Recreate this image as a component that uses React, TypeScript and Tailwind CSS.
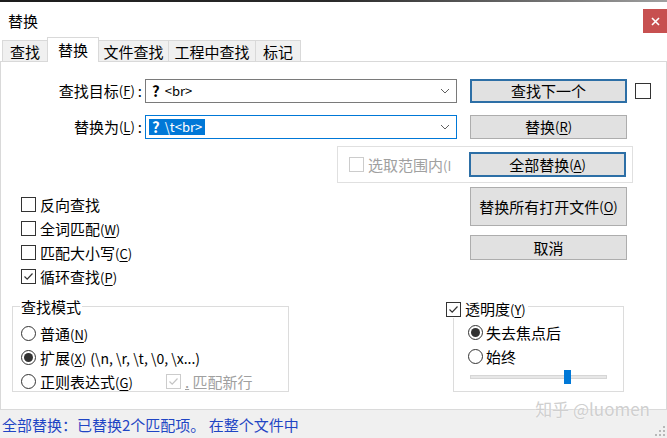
import React from "react";

const Mn = ({ ch }: { ch: string }) => (
  <span className="text-[13px]">
    (<span className="underline underline-offset-2">{ch}</span>)
  </span>
);

const Check = ({ checked = false, disabled = false }: { checked?: boolean; disabled?: boolean }) => (
  <span
    className={`flex h-[15px] w-[15px] shrink-0 items-center justify-center border bg-white ${
      disabled ? "border-[#cccccc]" : "border-[#333333]"
    }`}
  >
    {checked && (
      <svg width="11" height="11" viewBox="0 0 11 11" fill="none">
        <path
          d="M1.5 5.5L4.2 8.2L9.5 2.5"
          stroke={disabled ? "#c4c4c4" : "#333333"}
          strokeWidth="1.2"
        />
      </svg>
    )}
  </span>
);

const Radio = ({ on = false }: { on?: boolean }) => (
  <span className="flex h-[15px] w-[15px] shrink-0 items-center justify-center rounded-full border border-[#333333] bg-white">
    {on && <span className="h-[9px] w-[9px] rounded-full bg-[#333333]" />}
  </span>
);

const Btn = ({
  children,
  def = false,
  className = "",
}: {
  children: React.ReactNode;
  def?: boolean;
  className?: string;
}) => (
  <div
    className={`flex w-[157px] shrink-0 items-center justify-center bg-[#e1e1e1] ${
      def ? "border-2 border-[#2d6fa6]" : "border border-[#adadad]"
    } ${className}`}
  >
    {children}
  </div>
);

const Chevron = () => (
  <svg width="10" height="6" viewBox="0 0 10 6" fill="none" className="ml-auto mr-[6px]">
    <path d="M1 1L5 5L9 1" stroke="#606060" strokeWidth="1" />
  </svg>
);

const tabs = [
  { label: "查找", w: "w-[46px]" },
  { label: "替换", w: "w-[52px]", active: true },
  { label: "文件查找", w: "w-[71px]" },
  { label: "工程中查找", w: "w-[88px]" },
  { label: "标记", w: "w-[46px]" },
];

export default function App() {
  return (
    <div className="relative flex h-[438px] w-[667px] flex-col overflow-hidden bg-white font-['Noto_Sans_CJK_SC','Noto_Sans',sans-serif] text-[15px] leading-none text-black">
      <div className="h-[2px] bg-gradient-to-r from-[#1c1c1c] via-[#2a2a2a] to-[#a0a0a0]" />

      {/* title */}
      <div className="flex h-[35px] items-start justify-between">
        <span className="ml-[8px] mt-[10px] leading-[18px]">替换</span>
        <div className="mt-[7px] flex h-[24px] w-[24px] items-center justify-center bg-[#c75050]">
          <svg width="9" height="9" viewBox="0 0 9 9" fill="none">
            <path d="M1 1L8 8M8 1L1 8" stroke="#ffffff" strokeWidth="1.6" />
          </svg>
        </div>
      </div>

      {/* tabs */}
      <div className="flex h-[24px] items-end pl-[2px]">
        {tabs.map((t) =>
          t.active ? (
            <div
              key={t.label}
              className={`relative z-10 -mb-px -ml-px flex h-[25px] ${t.w} items-start justify-center border border-b-0 border-[#d9d9d9] bg-white pt-[4px]`}
            >
              {t.label}
            </div>
          ) : (
            <div
              key={t.label}
              className={`-ml-px flex h-[21px] ${t.w} items-center justify-center border border-b-0 border-[#d9d9d9] bg-[#f0f0f0] first:ml-0`}
            >
              {t.label}
            </div>
          )
        )}
      </div>

      {/* panel */}
      <div className="flex h-[348px] flex-col border-x border-t border-[#d9d9d9] pr-[2px]">
        {/* row 1 */}
        <div className="mt-[16px] flex h-[25px] items-center">
          <div className="flex w-[141px] items-center justify-end">
            查找目标<Mn ch="F" />
            <span className="ml-[3px]">:</span>
          </div>
          <div className="ml-[3px] flex h-[24px] w-[312px] items-center border border-[#7a7a7a] pl-[6px]">
            <span className="text-[15px] font-bold">?</span>
            <span className="ml-[5px] text-[13px]">&lt;br&gt;</span>
            <Chevron />
          </div>
          <Btn def className="ml-[13px] h-[24px]">
            查找下一个
          </Btn>
          <div className="ml-[8px]">
            <span className="block h-[16px] w-[16px] border border-[#333333]" />
          </div>
        </div>

        {/* row 2 */}
        <div className="mt-[11px] flex h-[25px] items-center">
          <div className="flex w-[141px] items-center justify-end">
            替换为<Mn ch="L" />
            <span className="ml-[3px]">:</span>
          </div>
          <div className="ml-[3px] flex h-[24px] w-[312px] items-center border border-[#0078d7] pl-[3px]">
            <span className="flex h-[16px] items-center bg-[#0078d7] px-[3px] text-white">
              <span className="text-[15px] font-bold">?</span>
              <span className="ml-[5px] text-[13px]">\t&lt;br&gt;</span>
            </span>
            <Chevron />
          </div>
          <Btn className="ml-[13px] h-[24px]">
            替换<Mn ch="R" />
          </Btn>
        </div>

        {/* row 3: selection group */}
        <div className="ml-[336px] mt-[7px] flex h-[37px] w-[296px] items-center border border-[#e0e0e0]">
          <div className="ml-[11px]">
            <Check disabled />
          </div>
          <span className="ml-[4px] w-[86px] whitespace-nowrap text-[#a0a0a0]">
            选取范围内<span className="text-[13px]">(I</span>
          </span>
          <Btn def className="ml-[15px] h-[25px]">
            全部替换<Mn ch="A" />
          </Btn>
        </div>

        {/* row 4 */}
        <div className="flex pl-[20px]">
          <div className="flex w-[449px] flex-col pt-[9px]">
            {[
              { t: "反向查找" },
              { t: "全词匹配", m: "W" },
              { t: "匹配大小写", m: "C" },
              { t: "循环查找", m: "P", c: true },
            ].map((r) => (
              <div key={r.t} className="flex h-[24px] items-center gap-[4px]">
                <Check checked={r.c} />
                <span>
                  {r.t}
                  {r.m && <Mn ch={r.m} />}
                </span>
              </div>
            ))}
          </div>
          <div className="flex flex-col pt-[4px]">
            <Btn className="h-[39px]">
              替换所有打开文件<Mn ch="O" />
            </Btn>
            <Btn className="mt-[9px] h-[25px]">取消</Btn>
          </div>
        </div>

        {/* row 5 */}
        <div className="mt-[18px] flex">
          <div className="relative ml-[11px] h-[86px] w-[277px] border border-[#dcdcdc] pl-[8px] pt-[14px]">
            <span className="absolute -top-[9px] left-[7px] bg-white px-[1px] leading-[17px]">查找模式</span>
            <div className="flex h-[24px] items-center gap-[4px]">
              <Radio />
              <span>
                普通<Mn ch="N" />
              </span>
            </div>
            <div className="flex h-[24px] items-center gap-[4px]">
              <Radio on />
              <span>
                扩展<Mn ch="X" />
                <span className="ml-[4px] text-[14px]">(\n, \r, \t, \0, \x...)</span>
              </span>
            </div>
            <div className="flex h-[24px] items-center gap-[4px]">
              <Radio />
              <span className="w-[122px]">
                正则表达式<Mn ch="G" />
              </span>
              <Check checked disabled />
              <span className="text-[#a0a0a0]">
                <span className="underline">.</span> 匹配新行
              </span>
            </div>
          </div>

          <div className="relative ml-[164px] h-[86px] w-[171px] border border-[#dcdcdc] pl-[14px] pt-[13px]">
            <div className="absolute -left-[8px] -top-[7px] flex w-[82px] items-center gap-[4px] bg-white leading-[17px]">
              <Check checked />
              <span>
                透明度<Mn ch="Y" />
              </span>
            </div>
            <div className="flex h-[24px] items-center gap-[3px]">
              <Radio on />
              <span>失去焦点后</span>
            </div>
            <div className="flex h-[24px] items-center gap-[3px]">
              <Radio />
              <span>始终</span>
            </div>
            <div className="relative ml-[2px] mt-[2px] h-[14px] w-[137px]">
              <div className="absolute left-0 right-0 top-[5px] h-[4px] border border-[#d6d6d6] bg-[#e7e7e7]" />
              <div className="absolute left-[94px] top-0 h-[14px] w-[7px] bg-[#0078d7]" />
            </div>
          </div>
        </div>
      </div>

      {/* status bar */}
      <div className="flex h-[29px] items-center border-t border-[#dadada] bg-[#f0f0f0] pl-[2px] text-[15px] text-[#1f45c4]">
        全部替换：已替换2个匹配项。 在整个文件中
      </div>

      {/* watermark */}
      <span className="absolute right-[17px] top-[399px] text-[17px] leading-[20px] text-[#cfcfcf] [text-shadow:0_0_2px_#ffffff]">
        知乎 @luomen
      </span>

      {/* resize grip */}
      <svg className="absolute bottom-[2px] right-[2px]" width="10" height="10" viewBox="0 0 10 10">
        {[
          [8, 0],
          [8, 4],
          [4, 4],
          [8, 8],
          [4, 8],
          [0, 8],
        ].map(([x, y]) => (
          <rect key={`${x}-${y}`} x={x} y={y} width="2" height="2" fill="#b8b8b8" />
        ))}
      </svg>
    </div>
  );
}
